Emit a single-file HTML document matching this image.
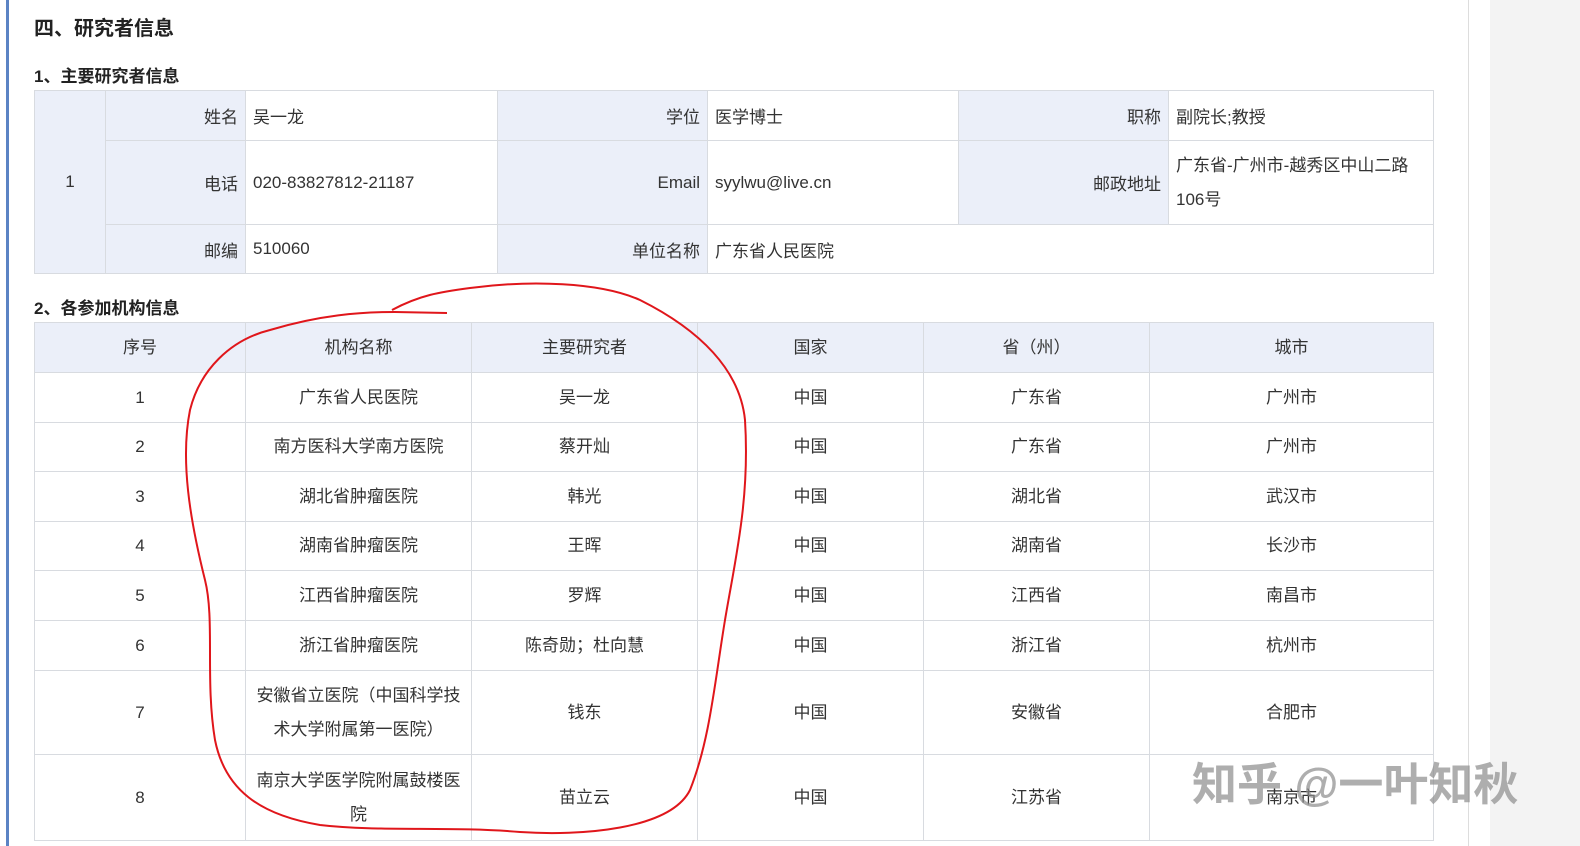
<!DOCTYPE html>
<html><head><meta charset="utf-8"><style>
*{margin:0;padding:0;box-sizing:border-box}
body{width:1580px;height:846px;overflow:hidden;background:#fff;font-family:"Liberation Sans","Noto Sans CJK SC",sans-serif;color:#333;position:relative}
.lb{position:absolute;left:6px;top:0;width:3px;height:846px;background:#5b83c4}
.vr{position:absolute;left:1468px;top:0;width:1px;height:846px;background:#ddd}
.gp{position:absolute;left:1490px;top:0;width:90px;height:846px;background:#f3f3f3}
h2{position:absolute;left:34px;top:12px;font-size:20px;font-weight:bold;color:#222}
h3{position:absolute;left:34px;font-size:17px;font-weight:bold;color:#222}
table{position:absolute;left:34px;border-collapse:collapse;table-layout:fixed;font-size:17px}
td{border:1px solid #d8dbe0;padding:0 7px}
.l{background:#ebeff9;text-align:right}
#t2 td{text-align:center;padding:0 4px;line-height:34px}
#t2 tr.h td{background:#ebeff9}
.wm{position:absolute;left:1192px;top:748px;font-size:45px;font-weight:bold;color:rgba(140,140,140,.7);letter-spacing:0px;white-space:nowrap}
svg{position:absolute;left:0;top:0}
</style></head><body>
<div class="lb"></div><div class="vr"></div><div class="gp"></div>
<h2>四、研究者信息</h2>
<h3 style="top:62px">1、主要研究者信息</h3>
<table style="top:90px;width:1399px">
<colgroup><col style="width:71px"><col style="width:140px"><col style="width:252px"><col style="width:210px"><col style="width:251px"><col style="width:210px"><col style="width:265px"></colgroup>
<tr style="height:50px"><td class="l" rowspan="3" style="text-align:center">1</td><td class="l">姓名</td><td>吴一龙</td><td class="l">学位</td><td>医学博士</td><td class="l">职称</td><td>副院长;教授</td></tr>
<tr style="height:84px"><td class="l">电话</td><td>020-83827812-21187</td><td class="l">Email</td><td>syylwu@live.cn</td><td class="l">邮政地址</td><td style="line-height:34px">广东省-广州市-越秀区中山二路106号</td></tr>
<tr style="height:49px"><td class="l">邮编</td><td>510060</td><td class="l">单位名称</td><td colspan="3">广东省人民医院</td></tr>
</table>
<h3 style="top:294px">2、各参加机构信息</h3>
<table id="t2" style="top:322px;width:1399px">
<colgroup><col style="width:211px"><col style="width:226px"><col style="width:226px"><col style="width:226px"><col style="width:226px"><col style="width:284px"></colgroup>
<tr class="h" style="height:50px"><td>序号</td><td>机构名称</td><td>主要研究者</td><td>国家</td><td>省（州）</td><td>城市</td></tr>
<tr style="height:50px"><td>1</td><td>广东省人民医院</td><td>吴一龙</td><td>中国</td><td>广东省</td><td>广州市</td></tr>
<tr style="height:49px"><td>2</td><td>南方医科大学南方医院</td><td>蔡开灿</td><td>中国</td><td>广东省</td><td>广州市</td></tr>
<tr style="height:50px"><td>3</td><td>湖北省肿瘤医院</td><td>韩光</td><td>中国</td><td>湖北省</td><td>武汉市</td></tr>
<tr style="height:49px"><td>4</td><td>湖南省肿瘤医院</td><td>王晖</td><td>中国</td><td>湖南省</td><td>长沙市</td></tr>
<tr style="height:50px"><td>5</td><td>江西省肿瘤医院</td><td>罗辉</td><td>中国</td><td>江西省</td><td>南昌市</td></tr>
<tr style="height:50px"><td>6</td><td>浙江省肿瘤医院</td><td>陈奇勋；杜向慧</td><td>中国</td><td>浙江省</td><td>杭州市</td></tr>
<tr style="height:84px"><td>7</td><td>安徽省立医院（中国科学技术大学附属第一医院）</td><td>钱东</td><td>中国</td><td>安徽省</td><td>合肥市</td></tr>
<tr style="height:86px"><td>8</td><td>南京大学医学院附属鼓楼医院</td><td>苗立云</td><td>中国</td><td>江苏省</td><td>南京市</td></tr>
</table>
<svg width="1580" height="846"><path d="M392 310 C420 295 440 292 470 288 C530 280 600 282 640 300 C700 330 740 370 745 420 C750 500 735 560 725 620 C715 680 710 740 690 790 C670 830 580 836 520 832 C450 826 380 832 320 825 C260 815 225 790 215 740 C205 680 215 620 205 580 C190 520 180 460 190 410 C200 370 230 340 270 330 C320 315 360 312 395 312 L447 313" fill="none" stroke="#e0161b" stroke-width="2"/></svg>
<div class="wm">知乎 @一叶知秋</div>
</body></html>
